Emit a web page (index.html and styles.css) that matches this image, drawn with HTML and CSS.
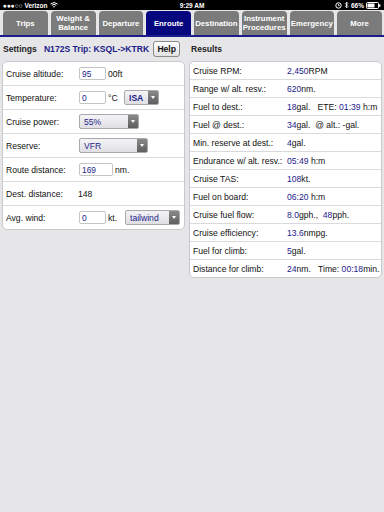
FILE: index.html
```html
<html>
<head>
	<link rel="stylesheet" href="styles.css">
</head>
<body>
	<div class="statusBar">
		<div class="carrier">&#9679;&#9679;&#9679;&#9675;&#9675; Verizon
			<svg width="8" height="6" viewBox="0 0 8 6"><path d="M0.5 2 Q4 -1 7.5 2 M1.8 3.3 Q4 1.3 6.2 3.3" stroke="#fff" stroke-width="1" fill="none"/><path d="M3 4.5 L4 5.8 L5 4.5 Q4 3.6 3 4.5 Z" fill="#fff"/></svg>
		</div>
		<div class="clock">9:29 AM</div>
		<div class="battery">
			<svg width="7" height="7" viewBox="0 0 7 7"><circle cx="3.5" cy="3.5" r="2.7" stroke="#fff" stroke-width="1" fill="none"/><path d="M3.5 2 V3.6 H4.8" stroke="#fff" stroke-width="0.8" fill="none"/></svg>
			<svg width="5" height="8" viewBox="0 0 5 8"><path d="M1 2.2 L4 5.5 L2.5 7 V1 L4 2.5 L1 5.8" stroke="#fff" stroke-width="0.8" fill="none"/></svg>
			<span>66%</span>
			<svg width="15" height="7" viewBox="0 0 15 7"><rect x="0.5" y="0.5" width="12" height="6" rx="1" stroke="#fff" fill="none"/><rect x="1.5" y="1.5" width="7" height="4" fill="#fff"/><rect x="13" y="2.3" width="1.4" height="2.4" fill="#fff"/></svg>
		</div>
	</div>

	<div class="tabBar">
		<div class="tab">Trips</div>
		<div class="tab">Weight &amp;<br>Balance</div>
		<div class="tab">Departure</div>
		<div class="tab active">Enroute</div>
		<div class="tab">Destination</div>
		<div class="tab">Instrument<br>Procedures</div>
		<div class="tab">Emergency</div>
		<div class="tab">More</div>
	</div>

	<div class="content">
		<div class="leftCol">
			<div class="sectionHead">
				<span class="headTitle">Settings</span>
				<span class="tripName">N172S Trip: KSQL-&gt;KTRK</span>
				<span class="helpBtn">Help</span>
			</div>
			<div class="panel">
				<div class="setRow">
					<div class="label">Cruise altitude:</div>
					<input class="field" type="text" value="95"><span class="unit">00ft</span>
				</div>
				<div class="setRow">
					<div class="label">Temperature:</div>
					<input class="field" type="text" value="0"><span class="unit">&deg;C</span>
					<div class="picker isaPick"><span>ISA</span><div class="arrow"></div></div>
				</div>
				<div class="setRow">
					<div class="label">Cruise power:</div>
					<div class="picker powerPick"><span>55%</span><div class="arrow"></div></div>
				</div>
				<div class="setRow">
					<div class="label">Reserve:</div>
					<div class="picker reservePick"><span>VFR</span><div class="arrow"></div></div>
				</div>
				<div class="setRow">
					<div class="label">Route distance:</div>
					<input class="field wide" type="text" value="169"><span class="unit">nm.</span>
				</div>
				<div class="setRow">
					<div class="label">Dest. distance:</div>
					<span class="plain">148</span>
				</div>
				<div class="setRow">
					<div class="label">Avg. wind:</div>
					<input class="field" type="text" value="0"><span class="unit">kt.</span>
					<div class="picker windPick"><span>tailwind</span><div class="arrow"></div></div>
				</div>
			</div>
		</div>

		<div class="rightCol">
			<div class="sectionHead">
				<span class="headTitle">Results</span>
			</div>
			<div class="panel">
				<div class="resRow"><div class="rlabel">Cruise RPM:</div><div><b class="val">2,450</b>RPM</div></div>
				<div class="resRow"><div class="rlabel">Range w/ alt. resv.:</div><div><b class="val">620</b>nm.</div></div>
				<div class="resRow"><div class="rlabel">Fuel to dest.:</div><div><b class="val">18</b>gal. &nbsp;&nbsp;ETE: <b class="val">01:39</b> h:m</div></div>
				<div class="resRow"><div class="rlabel">Fuel @ dest.:</div><div><b class="val">34</b>gal. &nbsp;@ alt.: -gal.</div></div>
				<div class="resRow"><div class="rlabel">Min. reserve at dest.:</div><div><b class="val">4</b>gal.</div></div>
				<div class="resRow"><div class="rlabel">Endurance w/ alt. resv.:</div><div><b class="val">05:49</b> h:m</div></div>
				<div class="resRow"><div class="rlabel">Cruise TAS:</div><div><b class="val">108</b>kt.</div></div>
				<div class="resRow"><div class="rlabel">Fuel on board:</div><div><b class="val">06:20</b> h:m</div></div>
				<div class="resRow"><div class="rlabel">Cruise fuel flow:</div><div><b class="val">8.0</b>gph., &nbsp;<b class="val">48</b>pph.</div></div>
				<div class="resRow"><div class="rlabel">Cruise efficiency:</div><div><b class="val">13.6</b>nmpg.</div></div>
				<div class="resRow"><div class="rlabel">Fuel for climb:</div><div><b class="val">5</b>gal.</div></div>
				<div class="resRow"><div class="rlabel">Distance for climb:</div><div><b class="val">24</b>nm. &nbsp;&nbsp;Time: <b class="val">00:18</b>min.</div></div>
			</div>
		</div>
	</div>
</body>
</html>
```

FILE: styles.css
```css
body {
	margin: 0;
	background: #e6e6e8;
	font-family: "Liberation Sans", Arial, sans-serif;
	font-size: 8.6px;
	color: #111;
	width: 384px;
	height: 512px;
	overflow: hidden;
}

/* iPad status bar */
.statusBar {
	height: 10px;
	background: #000;
	color: #fff;
	font-size: 6.5px;
	font-weight: bold;
	display: flex;
	align-items: center;
	justify-content: space-between;
	padding: 0 3px;
	position: relative;
}

.carrier, .battery {
	display: flex;
	align-items: center;
	gap: 2px;
}

.clock {
	position: absolute;
	left: 0;
	right: 0;
	text-align: center;
}

/* Tabs */
.tabBar {
	display: flex;
	gap: 3px;
	padding: 1px 2px 0 3px;
	border-bottom: 2px solid #1c1c8a;
}

.tab {
	flex: 1;
	height: 24px;
	background: #7b7b7b;
	color: #fff;
	font-weight: bold;
	font-size: 7.8px;
	line-height: 9px;
	border-radius: 4px 4px 0 0;
	display: flex;
	align-items: center;
	justify-content: center;
	text-align: center;
}

.tab.active {
	background: #06067f;
}

/* Columns */
.content {
	display: flex;
	padding: 0 2px;
	gap: 4px;
}

.leftCol {
	width: 183px;
}

.rightCol {
	width: 193px;
}

.sectionHead {
	height: 24px;
	display: flex;
	align-items: center;
	padding-left: 1px;
	font-weight: bold;
	color: #222;
}

.rightCol .sectionHead {
	padding-left: 2px;
}

.tripName {
	color: #1c1c8a;
	margin-left: 7px;
}

.helpBtn {
	margin-left: auto;
	margin-right: 5px;
	border: 1px solid #8a8a8a;
	border-radius: 3px;
	background: linear-gradient(#ffffff, #e2e2e2);
	padding: 2px 3px;
	color: #111;
}

.panel {
	background: #fff;
	border: 1px solid #c9c9cc;
	border-radius: 5px;
	overflow: hidden;
}

/* Settings rows */
.setRow {
	height: 23px;
	border-bottom: 1px solid #dadadc;
	display: flex;
	align-items: center;
	padding-left: 3px;
}

.setRow:last-child {
	border-bottom: none;
}

.label {
	width: 73px;
}

.field {
	width: 27px;
	height: 13px;
	box-sizing: border-box;
	border: 1px solid #c4c4c6;
	border-radius: 2px;
	padding: 0 2px;
	font-family: inherit;
	font-size: 8.4px;
	color: #1c1c8a;
	margin: 0;
}

.field.wide {
	width: 34px;
}

.unit {
	margin-left: 2px;
	width: 15px;
}

.plain {
	margin-left: -1px;
}

.picker {
	height: 15px;
	box-sizing: border-box;
	border: 1px solid #a9a9ab;
	border-radius: 2px;
	background: linear-gradient(#f4f4f6, #dfdfe3);
	display: flex;
	align-items: center;
	color: #1c1c8a;
	overflow: hidden;
}

.picker span {
	flex: 1;
	padding-left: 4px;
}

.isaPick span {
	font-weight: bold;
}

.arrow {
	width: 10px;
	height: 100%;
	background: linear-gradient(#8a8a8a, #5e5e5e);
	position: relative;
}

.arrow:after {
	content: "";
	position: absolute;
	left: 3px;
	top: 5px;
	border-left: 2px solid transparent;
	border-right: 2px solid transparent;
	border-top: 3px solid #fff;
}

.isaPick {
	width: 35px;
	margin-left: 1px;
}

.powerPick {
	width: 60px;
}

.reservePick {
	width: 69px;
}

.windPick {
	width: 55px;
	margin-left: 2px;
}

/* Result rows */
.resRow {
	height: 17px;
	border-bottom: 1px solid #dadadc;
	display: flex;
	align-items: center;
	padding-left: 3px;
}

.resRow:last-child {
	border-bottom: none;
}

.rlabel {
	width: 94px;
}

.val {
	font-weight: normal;
	color: #1c1c8a;
}
```
